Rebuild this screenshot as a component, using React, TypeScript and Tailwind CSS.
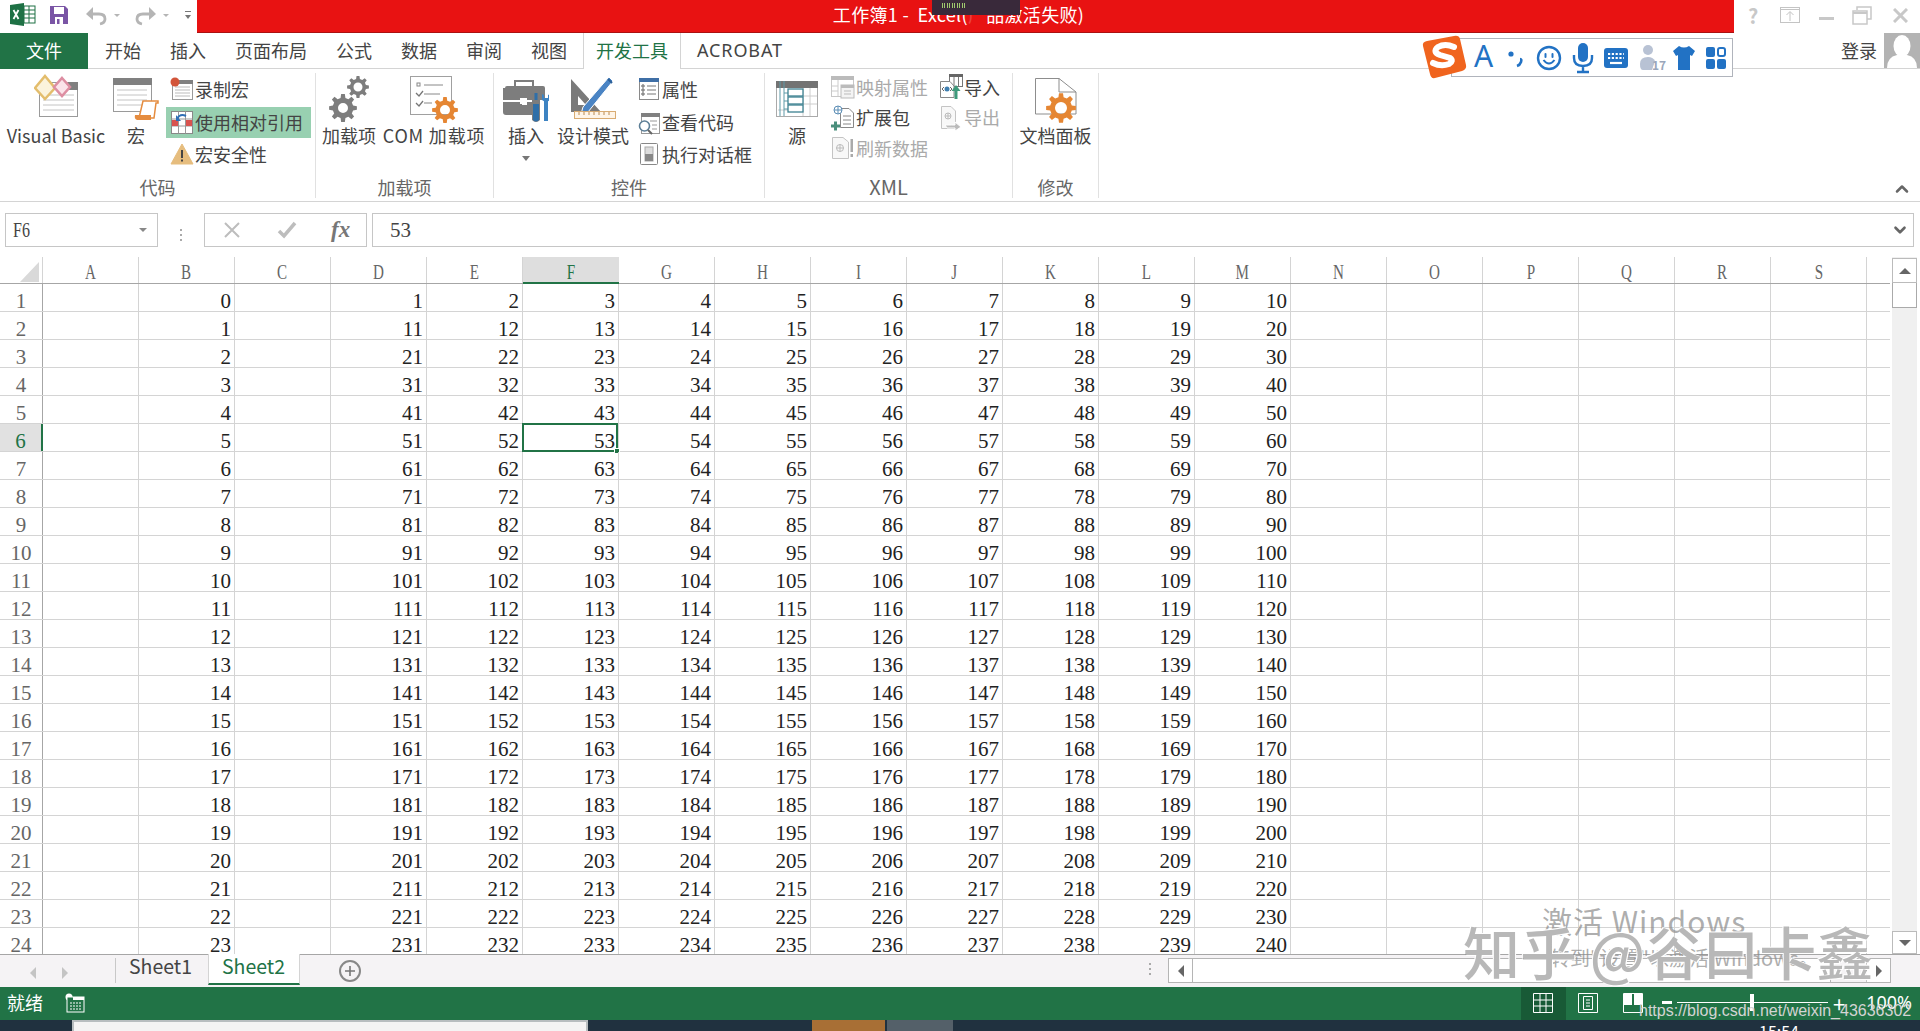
import type { ReactNode } from "react"
import { ChevronDown, ChevronUp } from "lucide-react"

const COLS = "ABCDEFGHIJKLMNOPQRS".split("")
const ROWS = Array.from({ length: 24 }, (_, i) => i)

const cellValue = (r: number, c: number) => {
  if (c === 1) return r
  if (c >= 3 && c <= 12) return r * 10 + c - 2
  return ""
}

// toothed wheel used by the add-in and document panel icons
function gearPath(cx: number, cy: number, r: number, hole: number, teeth = 8) {
  const step = (Math.PI * 2) / teeth
  const pts: string[] = []
  for (let i = 0; i < teeth; i++) {
    const a = i * step
    const list: [number, number][] = [
      [a - step * 0.3, r * 0.74],
      [a - step * 0.17, r],
      [a + step * 0.17, r],
      [a + step * 0.3, r * 0.74],
    ]
    list.forEach(([t, d]) => pts.push(`${(cx + Math.cos(t) * d).toFixed(2)} ${(cy + Math.sin(t) * d).toFixed(2)}`))
  }
  return `M${pts.join("L")}Z M${cx - hole} ${cy}a${hole} ${hole} 0 1 0 ${hole * 2} 0a${hole} ${hole} 0 1 0 ${-hole * 2} 0Z`
}

function Gear({ cx, cy, r, hole, fill }: { cx: number; cy: number; r: number; hole: number; fill: string }) {
  return <path d={gearPath(cx, cy, r, hole)} fill={fill} fillRule="evenodd" />
}

function Sep() {
  return <div className="mt-[4px] h-[125px] w-px shrink-0 bg-[#e1e1e1]" />
}

function Group({ width, label, labelClass = "", children }: { width: string; label: string; labelClass?: string; children: ReactNode }) {
  return (
    <div className={`flex shrink-0 flex-col pt-[5px] ${width}`}>
      <div className="flex h-[101px]">{children}</div>
      <div className={`flex h-[27px] items-center justify-center pb-[1px] text-[18px] leading-none text-[#666] ${labelClass}`}>{label}</div>
    </div>
  )
}

function LargeButton({ width, label, icon, caret, labelClass = "" }: { width: string; label: string; icon: ReactNode; caret?: boolean; labelClass?: string }) {
  return (
    <div className={`flex shrink-0 flex-col items-center ${width}`}>
      <div className="flex h-[50px] justify-center">{icon}</div>
      <div className={`-mt-[2px] h-[26px] whitespace-nowrap text-[18px] leading-[26px] text-[#444] ${labelClass}`}>{label}</div>
      {caret && <div className="mt-[8px] h-0 w-0 border-x-[4px] border-t-[5px] border-x-transparent border-t-[#777]" />}
    </div>
  )
}

function SmallButton({ label, icon, className = "", active, muted, h = "h-[32px]" }: { label: string; icon: ReactNode; className?: string; active?: boolean; muted?: boolean; h?: string }) {
  return (
    <div className={`flex items-center whitespace-nowrap text-[18px] ${h} ${active ? "bg-[#98d0b1]" : ""} ${muted ? "text-[#aaa]" : "text-[#444]"} ${className}`}>
      <div className="flex w-[26px] shrink-0 justify-center">{icon}</div>
      {label}
    </div>
  )
}

const VbIcon = (
  <svg width="44" height="50" viewBox="0 0 44 50">
    <rect x="5.5" y="8.5" width="38" height="34" fill="#fff" stroke="#9a9a9a" />
    <rect x="34" y="8" width="10" height="8" fill="#808080" />
    {[21, 26, 31, 36].map((y) => (
      <path key={y} d={`M9 ${y}H40`} stroke="#c4c4c4" />
    ))}
    <path d="M11 2L21 14 11 25 1 14Z" fill="#fbf3dc" stroke="#e3bd6c" strokeWidth="2.5" />
    <path d="M28 4L36 13 28 22 20 13Z" fill="#fbe4ea" stroke="#dd8ea2" strokeWidth="2.5" />
  </svg>
)

const MacroIcon = (
  <svg width="46" height="50" viewBox="0 0 46 50">
    <rect x="0.5" y="4.5" width="38" height="33" fill="#fff" stroke="#9a9a9a" />
    <rect x="0" y="4" width="39" height="7" fill="#808080" />
    {[16, 21, 26, 31].map((y) => (
      <path key={y} d={`M4 ${y}H34`} stroke="#c4c4c4" />
    ))}
    <path d="M30 27H45V29H43L41 44H26Z" fill="#fff" stroke="#e58c3f" strokeWidth="1.5" />
    <path d="M22 41H38V46H24Q21 45 22 41Z" fill="#e58c3f" />
  </svg>
)

const RecordIcon = (
  <svg width="24" height="24" viewBox="0 0 24 24">
    <rect x="2.5" y="3.5" width="20" height="19" fill="#fff" stroke="#9a9a9a" />
    <rect x="2" y="3" width="21" height="4" fill="#808080" />
    {[10, 13, 16, 19].map((y) => (
      <path key={y} d={`M5 ${y}H20`} stroke="#bbb" />
    ))}
    <circle cx="5" cy="5" r="4.5" fill="#d2553a" />
  </svg>
)

const RelativeIcon = (
  <svg width="24" height="26" viewBox="0 0 24 26">
    <rect x="1.5" y="1.5" width="21" height="22" fill="#fff" stroke="#888" />
    <path d="M8.5 1.5V23.5M15.5 1.5V23.5M1.5 9H22.5M1.5 16H22.5" stroke="#999" />
    <rect x="2" y="10" width="6" height="6" fill="#d9534f" />
    <rect x="16" y="10" width="6" height="6" fill="#d9534f" />
    <path d="M7 9Q10 3 16 6" fill="none" stroke="#2f6fb5" strokeWidth="2" />
    <path d="M6 5V11H11Z" fill="#2f6fb5" />
  </svg>
)

const WarnIcon = (
  <svg width="24" height="22" viewBox="0 0 24 22">
    <path d="M12 1L23 21H1Z" fill="#e6bd7e" stroke="#e6bd7e" strokeLinejoin="round" />
    <rect x="11" y="7" width="2" height="8" fill="#444" />
    <rect x="11" y="16.5" width="2" height="2" fill="#444" />
  </svg>
)

const AddinIcon = (
  <svg width="40" height="50" viewBox="0 0 40 50">
    <Gear cx={14} cy={34} r={14} hole={5} fill="#7d7d7d" />
    <Gear cx={29} cy={13} r={11} hole={4.5} fill="#7d7d7d" />
  </svg>
)

const ComIcon = (
  <svg width="48" height="50" viewBox="0 0 48 50">
    <rect x="0.5" y="2.5" width="41" height="38" fill="#fff" stroke="#a0a0a0" />
    <rect x="7" y="9" width="3" height="3" fill="none" stroke="#888" />
    <path d="M14 11H33M14 20H30M14 29H22" stroke="#888" />
    <path d="M6 19L9 22 13 17M6 29L9 32 13 27" fill="none" stroke="#777" strokeWidth="1.3" />
    <Gear cx={35} cy={36} r={13} hole={5} fill="#e58633" />
  </svg>
)

const ToolboxIcon = (
  <svg width="46" height="50" viewBox="0 0 46 50">
    <path d="M12 12V7H30V12" fill="none" stroke="#7d7d7d" strokeWidth="2" />
    <path d="M2 14Q2 12 4 12H40Q42 12 42 14V26H24V29H19V26H0V14Z" fill="#7d7d7d" />
    <path d="M0 28H19V31H24V28H30V41H3Q0 41 0 38Z" fill="#7d7d7d" />
    <rect x="17" y="24" width="7" height="6" fill="#fff" />
    <path d="M29 26H37V46Q33 50 29 46Z" fill="#7d7d7d" />
    <path d="M33 19V26" stroke="#2f6fa8" strokeWidth="3" />
    <path d="M30 30H36V46Q33 49 30 46Z" fill="#2f6fa8" />
    <path d="M43 26V47" stroke="#3d83c2" strokeWidth="4" />
    <path d="M39 20V26Q43 29 47 26V20L45 21V24H41V21Z" fill="#3d83c2" />
  </svg>
)

const DesignIcon = (
  <svg width="46" height="50" viewBox="0 0 46 50">
    <path d="M1 5V38H31ZM8 22V31H16Z" fill="#7a7a7a" fillRule="evenodd" />
    <path d="M43 7L39 3 13 33 11 40 18 38Z" fill="#4a84c4" stroke="#fff" />
    <path d="M38 5L42 9" stroke="#2d6098" strokeWidth="2" />
    <rect x="4.5" y="37.5" width="41" height="7" fill="#fff5e8" stroke="#d9ac73" />
    <path d="M9 38V41M14 38V41M19 38V41M24 38V41M29 38V41M34 38V41M39 38V41" stroke="#b98a50" />
  </svg>
)

const PropsIcon = (
  <svg width="22" height="24" viewBox="0 0 22 24">
    <rect x="1.5" y="1.5" width="19" height="21" fill="#fff" stroke="#8a8a8a" />
    <rect x="1" y="1" width="20" height="4" fill="#3f6fa6" />
    <path d="M9 9H18M9 13H18M9 17H18" stroke="#777" />
    <circle cx="5" cy="9" r="1.2" fill="none" stroke="#555" />
    <circle cx="5" cy="13" r="1.2" fill="none" stroke="#555" />
    <circle cx="5" cy="17" r="1.2" fill="none" stroke="#555" />
  </svg>
)

const ViewCodeIcon = (
  <svg width="24" height="24" viewBox="0 0 24 24">
    <rect x="4.5" y="2.5" width="18" height="20" fill="#fff" stroke="#999" />
    <rect x="4" y="2" width="19" height="4" fill="#808080" />
    <path d="M13 10H20M15 14H20M15 18H20" stroke="#999" />
    <circle cx="7.5" cy="15" r="5" fill="#fff" stroke="#5d7f97" strokeWidth="1.6" />
    <path d="M11 19L15 23" stroke="#666" strokeWidth="2" />
  </svg>
)

const DialogIcon = (
  <svg width="20" height="24" viewBox="0 0 20 24">
    <rect x="1.5" y="1.5" width="17" height="21" rx="1" fill="#fff" stroke="#888" />
    <rect x="6" y="5" width="8" height="14" fill="#ddd" stroke="#aaa" />
    <rect x="6" y="12" width="8" height="7" fill="#888" />
  </svg>
)

const SourceIcon = (
  <svg width="42" height="50" viewBox="0 0 42 50">
    <rect x="0.5" y="7.5" width="41" height="35" fill="#fff" stroke="#aaa" />
    <path d="M27 14V42M34 14V42M27 22H41M27 30H41M2 36H27" stroke="#ccc" />
    <rect x="0" y="7" width="42" height="7" fill="#737373" />
    <path d="M4 7V42M8 7V42M8 19H12M8 27H12M8 35H12" stroke="#5f9aa8" />
    <rect x="12" y="15" width="15" height="7" fill="#fff" stroke="#3d8191" strokeWidth="1.3" />
    <rect x="12" y="23" width="15" height="7" fill="#fff" stroke="#3d8191" strokeWidth="1.3" />
    <rect x="12" y="31" width="15" height="7" fill="#fff" stroke="#3d8191" strokeWidth="1.3" />
  </svg>
)

const MapIcon = (
  <svg width="24" height="24" viewBox="0 0 24 24">
    <rect x="0.5" y="1.5" width="22" height="20" fill="#fff" stroke="#c8c8c8" />
    <rect x="0" y="1" width="23" height="4" fill="#bbb" />
    <path d="M7 5V21M1 11H7M1 16H7" stroke="#ccc" />
    <rect x="10" y="10" width="13" height="13" fill="#f4f4f4" stroke="#bbb" />
    <rect x="10" y="10" width="13" height="3" fill="#bbb" />
    <path d="M13 16H20M13 19H20" stroke="#bbb" />
  </svg>
)

const PackIcon = (
  <svg width="24" height="26" viewBox="0 0 24 26">
    <path d="M9.5 3.5H18L22.5 8V22.5H9.5Z" fill="#fff" stroke="#888" />
    <path d="M12 11H20M12 15H20M12 19H20" stroke="#888" />
    <circle cx="7" cy="5" r="4" fill="#fff" stroke="#5b8db5" />
    <path d="M3 5H11M7 1V9" stroke="#5b8db5" />
    <path d="M0 21H9M4.5 16.5V25.5" stroke="#4a8f7c" strokeWidth="3" />
  </svg>
)

const RefreshIcon = (
  <svg width="24" height="24" viewBox="0 0 24 24">
    <path d="M1.5 1.5H12L17.5 6V22.5H1.5Z" fill="#f8f8f8" stroke="#c4c4c4" />
    <circle cx="9" cy="12" r="3.5" fill="none" stroke="#bbb" />
    <path d="M5.5 12H12.5M9 8.5V15.5" stroke="#bbb" />
    <rect x="19.5" y="3" width="2.5" height="13" fill="#aaa" />
    <rect x="19.5" y="18" width="2.5" height="3" fill="#aaa" />
  </svg>
)

const ImportIcon = (
  <svg width="24" height="26" viewBox="0 0 24 26">
    <rect x="10.5" y="0.5" width="13" height="12" fill="#fff" stroke="#777" />
    <rect x="10" y="0" width="14" height="3" fill="#666" />
    <path d="M15 3V12M19.5 3V12" stroke="#777" />
    <path d="M1.5 7.5H11L15 12V23.5H1.5Z" fill="#fff" stroke="#888" />
    <circle cx="8" cy="15" r="2.5" fill="#3f7fb0" />
    <path d="M3 15L5 13M3 15L5 17M13 15L11 13M13 15L11 17" stroke="#666" />
    <path d="M17 25V15" stroke="#3e9a7c" strokeWidth="3" />
    <path d="M12.5 17L17 11 21.5 17Z" fill="#3e9a7c" />
  </svg>
)

const ExportIcon = (
  <svg width="24" height="26" viewBox="0 0 24 26">
    <path d="M2.5 1.5H12L16.5 6V23.5H2.5Z" fill="#f8f8f8" stroke="#c4c4c4" />
    <circle cx="9" cy="11" r="3" fill="none" stroke="#bbb" />
    <path d="M6 11H12M9 8V14" stroke="#bbb" />
    <path d="M6 20Q14 20 16 20V17L22 22 16 26V23H8Z" fill="#bbb" stroke="#fff" />
  </svg>
)

const PanelIcon = (
  <svg width="42" height="50" viewBox="0 0 42 50">
    <path d="M0.5 4.5H24L41 18V40H0.5Z" fill="#fff" stroke="#8d8d8d" />
    <path d="M24 4.5V18H41" fill="none" stroke="#8d8d8d" />
    <Gear cx={26} cy={34} r={15} hole={6} fill="#e58633" />
  </svg>
)

function SogouBar() {
  return (
    <div className="absolute left-[1421px] top-[35px] h-[44px] w-[312px]">
      <div className="absolute bottom-[2px] left-[30px] right-0 top-[3px] flex items-center border border-[#b0b4bc] bg-white">
        <span className="absolute left-[22px] -mt-[3px] font-['Noto_Sans',sans-serif] text-[30px] leading-none text-[#2272c4]">A</span>
        <svg className="absolute left-[53px]" width="22" height="22" viewBox="0 0 22 22">
          <circle cx="6" cy="7" r="2.6" fill="#2272c4" />
          <path d="M15 12Q17 12 16 15 15 18 12 19" fill="none" stroke="#2272c4" strokeWidth="2.6" />
        </svg>
        <svg className="absolute left-[84px]" width="26" height="26" viewBox="0 0 26 26">
          <circle cx="13" cy="13" r="11" fill="none" stroke="#2272c4" strokeWidth="2.4" />
          <rect x="8.5" y="8" width="2" height="5" rx="1" fill="#2272c4" />
          <rect x="15.5" y="8" width="2" height="5" rx="1" fill="#2272c4" />
          <path d="M7.5 15Q13 22 18.5 15" fill="none" stroke="#2272c4" strokeWidth="2" />
        </svg>
        <svg className="absolute left-[119px]" width="24" height="32" viewBox="0 0 24 32">
          <rect x="7" y="1" width="10" height="19" rx="5" fill="#2272c4" />
          <path d="M3 13V16Q3 24 12 24 21 24 21 16V13M12 24V29M6 30H18" fill="none" stroke="#2272c4" strokeWidth="2.4" />
        </svg>
        <svg className="absolute left-[151px]" width="26" height="22" viewBox="0 0 26 22">
          <rect x="1" y="1" width="24" height="20" rx="3" fill="#2272c4" />
          <path d="M5 7H21M5 11H21" stroke="#fff" strokeWidth="2.2" strokeDasharray="2.2 1.6" />
          <path d="M7 16H19" stroke="#fff" strokeWidth="2.2" />
        </svg>
        <svg className="absolute left-[187px]" width="28" height="28" viewBox="0 0 28 28">
          <circle cx="9" cy="6" r="5" fill="#b8c2d4" />
          <path d="M1 20Q1 13 9 13 14 13 16 17L13 26H4Q1 26 1 20Z" fill="#b8c2d4" />
          <text x="13" y="26" fontSize="12" fontWeight="700" fill="#9aa6ba">17</text>
        </svg>
        <svg className="absolute left-[220px]" width="24" height="28" viewBox="0 0 24 28">
          <path d="M7 2Q12 5 17 2L23 7 20 12 18 11V26H6V11L4 12 1 7Z" fill="#2272c4" />
        </svg>
        <svg className="absolute left-[253px]" width="22" height="26" viewBox="0 0 22 26">
          <rect x="1" y="2" width="9" height="10" rx="2" fill="#2272c4" />
          <rect x="13" y="3" width="7" height="8" rx="2" fill="none" stroke="#2272c4" strokeWidth="2" />
          <rect x="1" y="14" width="9" height="10" rx="2" fill="#2272c4" />
          <rect x="12" y="14" width="9" height="10" rx="2" fill="#2272c4" />
        </svg>
      </div>
      <svg className="absolute left-0 top-0" width="46" height="44" viewBox="0 0 46 44">
        <path d="M2 11Q1 7 6 6L33 1Q38 0 39 4L45 30Q46 34 41 36L14 43Q10 44 9 39Z" fill="#f0641e" />
        <path d="M33 12Q24 8 17 12 11 17 19 20L29 23Q33 26 28 29 20 32 12 28" fill="none" stroke="#fff" strokeWidth="6" strokeLinecap="round" />
      </svg>
    </div>
  )
}

function TitleBar() {
  return (
    <div className="flex h-[33px] shrink-0">
      <div className="relative w-[197px] shrink-0">
        <svg className="absolute left-[10px] top-[3px]" width="26" height="23" viewBox="0 0 26 23">
          <path d="M0 2L14 0V23L0 21Z" fill="#1e7145" />
          <rect x="14" y="3" width="11" height="17" fill="#fff" stroke="#1e7145" />
          <path d="M14 7H25M14 11H25M14 15H25M19 3V20" stroke="#1e7145" />
          <path d="M3.5 7L8.5 16M8.5 7L3.5 16" stroke="#fff" strokeWidth="1.8" />
        </svg>
        <svg className="absolute left-[49px] top-[5px]" width="20" height="20" viewBox="0 0 20 20">
          <path d="M1 1H16L19 4V19H1Z" fill="#7a55a5" />
          <rect x="5" y="2" width="10" height="7" fill="#fff" />
          <rect x="6" y="12" width="8" height="7" fill="#fff" />
          <rect x="8" y="14" width="2.5" height="5" fill="#7a55a5" />
        </svg>
        <svg className="absolute left-[85px] top-[6px]" width="22" height="20" viewBox="0 0 22 20">
          <path d="M5 8H14Q20 8 20 13 20 17 15 18" fill="none" stroke="#b5b5b5" strokeWidth="2.8" />
          <path d="M8 1L1 8 8 14Z" fill="#b5b5b5" />
        </svg>
        <div className="absolute left-[114px] top-[14px] h-0 w-0 border-x-[3px] border-t-[3px] border-x-transparent border-t-[#b5b5b5]" />
        <svg className="absolute left-[135px] top-[6px]" width="22" height="20" viewBox="0 0 22 20">
          <path d="M17 8H8Q2 8 2 13 2 17 7 18" fill="none" stroke="#b5b5b5" strokeWidth="2.8" />
          <path d="M14 1L21 8 14 14Z" fill="#b5b5b5" />
        </svg>
        <div className="absolute left-[163px] top-[14px] h-0 w-0 border-x-[3px] border-t-[3px] border-x-transparent border-t-[#b5b5b5]" />
        <div className="absolute left-[185px] top-[11px] h-[1px] w-[6px] bg-[#777]" />
        <div className="absolute left-[185px] top-[15px] h-0 w-0 border-x-[3px] border-t-[4px] border-x-transparent border-t-[#777]" />
      </div>
      <div className="relative flex flex-1 items-center justify-center border-b border-[#a11] bg-[#e81212] pb-[3px] pr-[14px] text-[18px] tracking-[0.3px] text-white">
        工作簿1&nbsp;-&nbsp;&nbsp;Excel(<span className="opacity-20">产</span>品激活失败)
        <div className="absolute left-[735px] top-0 flex h-[15px] w-[88px] items-start bg-[#39293a] pl-[10px] pt-[3px]">
          <div className="h-[5px] w-[24px] bg-[repeating-linear-gradient(90deg,#9fc86e_0,#9fc86e_1px,#39293a_1px,#39293a_2.5px)]" />
        </div>
      </div>
      <div className="relative w-[186px] shrink-0">
        <span className="absolute left-[14px] top-[1px] text-[20px] font-bold text-[#c8c8c8]">?</span>
        <svg className="absolute left-[46px] top-[7px]" width="20" height="16" viewBox="0 0 20 16">
          <rect x="0.5" y="0.5" width="19" height="15" fill="none" stroke="#c4c4c4" />
          <path d="M1 2.5H19M10 14V5M6.5 8L10 4.5 13.5 8" fill="none" stroke="#c4c4c4" />
        </svg>
        <div className="absolute left-[85px] top-[17px] h-[3px] w-[15px] bg-[#c8c8c8]" />
        <svg className="absolute left-[118px] top-[6px]" width="20" height="19" viewBox="0 0 20 19">
          <path d="M5 4V1H19V13H15" fill="none" stroke="#c8c8c8" strokeWidth="1.5" />
          <rect x="1" y="5" width="14" height="13" fill="none" stroke="#c8c8c8" strokeWidth="1.5" />
          <path d="M1 7H15" stroke="#c8c8c8" strokeWidth="2" />
        </svg>
        <svg className="absolute left-[159px] top-[8px]" width="15" height="15" viewBox="0 0 15 15">
          <path d="M1 1L14 14M14 1L1 14" stroke="#c8c8c8" strokeWidth="3" />
        </svg>
      </div>
    </div>
  )
}

function TabBar() {
  const plain = ["开始", "插入", "页面布局", "公式", "数据", "审阅", "视图"]
  return (
    <div className="flex h-[36px] shrink-0 border-b border-[#d4d4d4] text-[18px] leading-[35px] text-[#444]">
      <div className="h-[36px] w-[88px] bg-[#217346] text-center text-white">文件</div>
      <div className="w-[2.5px]" />
      {plain.map((t) => (
        <div key={t} className="px-[14.5px]">
          {t}
        </div>
      ))}
      <div className="ml-[1.5px] h-[36px] w-[98px] border-x border-[#d4d4d4] bg-white text-center text-[#217346]">开发工具</div>
      <div className="pl-[16px] font-['Noto_Sans',sans-serif] tracking-[0.9px]">ACROBAT</div>
      <div className="ml-auto mr-[7px] text-[#444]">登录</div>
      <div className="h-[35px] w-[36px] overflow-hidden bg-[#b3b3b3]">
        <svg width="36" height="35" viewBox="0 0 36 35">
          <ellipse cx="18" cy="13" rx="8.5" ry="11" fill="#fff" />
          <path d="M3 35Q3 24 13 22H23Q33 24 33 35Z" fill="#fff" />
        </svg>
      </div>
    </div>
  )
}

function Ribbon() {
  return (
    <div className="flex h-[133px] shrink-0 border-b border-[#d4d4d4]">
      <Group width="w-[315px]" label="代码">
        <LargeButton width="w-[112px]" label="Visual Basic" icon={VbIcon} />
        <LargeButton width="w-[48px]" label="宏" icon={MacroIcon} />
        <div className="ml-[6px] w-[145px] shrink-0">
          <SmallButton h="h-[30px]" label="录制宏" icon={RecordIcon} className="pl-[3px]" />
          <SmallButton h="h-[31px]" label="使用相对引用" icon={RelativeIcon} active className="mt-[3px] pl-[3px]" />
          <SmallButton label="宏安全性" icon={WarnIcon} className="pl-[3px]" />
        </div>
      </Group>
      <Sep />
      <Group width="w-[177px]" label="加载项">
        <LargeButton width="w-[66px]" label="加载项" icon={AddinIcon} />
        <LargeButton width="w-[104px]" label="COM 加载项" labelClass="tracking-[0.8px]" icon={ComIcon} />
      </Group>
      <Sep />
      <Group width="w-[270px]" label="控件">
        <LargeButton width="w-[64px]" label="插入" icon={ToolboxIcon} caret />
        <LargeButton width="w-[70px]" label="设计模式" icon={DesignIcon} />
        <div className="ml-[8px]">
          <SmallButton h="h-[30px]" label="属性" icon={PropsIcon} />
          <SmallButton h="h-[31px]" label="查看代码" icon={ViewCodeIcon} className="mt-[3px]" />
          <SmallButton label="执行对话框" icon={DialogIcon} />
        </div>
      </Group>
      <Sep />
      <Group width="w-[247px]" label="XML" labelClass="text-[20px]">
        <LargeButton width="w-[64px]" label="源" icon={SourceIcon} />
        <div className="ml-[1px] -mt-[2px] w-[108px]">
          <SmallButton h="h-[30.5px]" label="映射属性" icon={MapIcon} muted />
          <SmallButton h="h-[30.5px]" label="扩展包" icon={PackIcon} />
          <SmallButton h="h-[30.5px]" label="刷新数据" icon={RefreshIcon} muted />
        </div>
        <div className="-mt-[2px]">
          <SmallButton h="h-[30.5px]" label="导入" icon={ImportIcon} />
          <SmallButton h="h-[30.5px]" label="导出" icon={ExportIcon} muted />
        </div>
      </Group>
      <Sep />
      <Group width="w-[85px]" label="修改">
        <LargeButton width="w-[85px]" label="文档面板" icon={PanelIcon} />
      </Group>
      <Sep />
      <div className="ml-auto mr-[8px] self-end pb-[2px]">
        <ChevronUp size={20} strokeWidth={3} className="text-[#666]" />
      </div>
    </div>
  )
}

function FormulaBar() {
  return (
    <div className="flex h-[55px] shrink-0 pl-[5px] pt-[11px] font-['Liberation_Serif',serif]">
      <div className="flex h-[34px] w-[153px] items-center justify-between border border-[#c6c6c6] pl-[7px] pr-[10px] text-[20px] leading-[36px] text-[#444]">
        <span className="inline-block origin-left scale-x-[0.8]">F6</span>
        <div className="h-0 w-0 border-x-[4px] border-t-[4px] border-x-transparent border-t-[#888]" />
      </div>
      <div className="flex w-[46px] items-center justify-center">
        <div className="h-[13px] w-[2px] bg-[repeating-linear-gradient(180deg,#aaa_0,#aaa_2px,transparent_2px,transparent_5px)]" />
      </div>
      <div className="relative flex h-[34px] w-[163px] items-center border border-[#c6c6c6]">
        <svg className="absolute left-[18px]" width="18" height="18" viewBox="0 0 18 18">
          <path d="M2 2L16 16M16 2L2 16" stroke="#bdbdbd" strokeWidth="2" />
        </svg>
        <svg className="absolute left-[72px]" width="20" height="18" viewBox="0 0 20 18">
          <path d="M2 10L7 15 18 2" fill="none" stroke="#bdbdbd" strokeWidth="3.5" />
        </svg>
        <span className="absolute left-[126px] text-[23px] font-bold italic text-[#777]">fx</span>
      </div>
      <div className="ml-[5px] flex h-[34px] w-[1542px] items-center border border-[#c6c6c6] pl-[17px] pr-[4px] text-[21px] leading-[36px] text-[#444]">
        <span>53</span>
        <ChevronDown size={18} strokeWidth={3.5} className="ml-auto text-[#666]" />
      </div>
    </div>
  )
}

function Sheet() {
  return (
    <div className="flex h-[697px] shrink-0 overflow-hidden">
      <div className="w-[1890px] shrink-0 font-['Liberation_Serif',serif] text-[21px]">
        <div className="flex h-[27px] border-b border-[#a6a6a6] leading-[30px] text-[#666]">
          <div className="relative w-[43px] shrink-0 border-r border-[#d4d4d4]">
            <svg className="absolute left-[20px] top-[5px]" width="19" height="20" viewBox="0 0 19 20">
              <path d="M19 0V20H0Z" fill="#d9d9d9" />
            </svg>
          </div>
          {COLS.map((c) => (
            <div key={c} className={`w-[96px] shrink-0 text-center ${c === "F" ? "h-[27px] border-b-2 border-[#217346] bg-[#dedede] text-[#217346]" : "border-r border-[#d4d4d4]"}`}>
              <span className="inline-block scale-x-[0.72]">{c}</span>
            </div>
          ))}
        </div>
        {ROWS.map((r) => (
          <div key={r} className="flex h-[28px] border-b border-[#d4d4d4] leading-[34px] text-[#222]">
            <div className={`w-[43px] shrink-0 border-r text-center ${r === 5 ? "border-r-2 border-[#217346] bg-[#e1e1e1] text-[#217346]" : "border-[#a6a6a6] text-[#666]"}`}>{r + 1}</div>
            {COLS.map((c, i) => (
              <div key={c} className="relative h-[28px] w-[96px] shrink-0 border-r border-[#d4d4d4] pr-[3px] text-right">
                {cellValue(r, i)}
                {r === 5 && c === "F" && (
                  <div className="absolute -left-px -top-px bottom-0 right-0 border-2 border-[#217346]">
                    <div className="absolute -bottom-[4px] -right-[4px] h-[6px] w-[6px] border border-white bg-[#217346]" />
                  </div>
                )}
              </div>
            ))}
            <div className="h-[28px] flex-1" />
          </div>
        ))}
      </div>
      <div className="ml-[2px] flex w-[25px] shrink-0 flex-col bg-[#f0f0f0]">
        <div className="mt-[1px] flex h-[25px] items-center justify-center border border-[#bbb] bg-white">
          <div className="h-0 w-0 border-x-[6px] border-b-[6px] border-x-transparent border-b-[#666]" />
        </div>
        <div className="h-[25px] border-x border-b border-[#aaa] bg-white" />
        <div className="flex-1" />
        <div className="flex h-[23px] items-center justify-center border border-[#bbb] bg-white">
          <div className="h-0 w-0 border-x-[6px] border-t-[6px] border-x-transparent border-t-[#666]" />
        </div>
      </div>
    </div>
  )
}

function SheetTabs() {
  return (
    <div className="flex h-[33px] shrink-0 items-start border-t border-[#a6a6a6] bg-[#f5f3f5] text-[19.5px]">
      <div className="mt-[12px] flex w-[115px] pl-[30px]">
        <div className="h-0 w-0 border-y-[6px] border-r-[6px] border-y-transparent border-r-[#c4c4c4]" />
        <div className="ml-[26px] h-0 w-0 border-y-[6px] border-l-[6px] border-y-transparent border-l-[#c4c4c4]" />
      </div>
      <div className="mt-[3px] h-[25px] w-px bg-[#c8c8c8]" />
      <div className="h-[29px] w-[92px] pl-[13px] leading-[22px] text-[#444]">Sheet1</div>
      <div className="-mt-px h-[31px] w-[92px] border-x border-b-2 border-x-[#d4d4d4] border-b-[#217346] bg-white pl-[13px] leading-[23px] text-[#217346]">Sheet2</div>
      <div className="ml-[39px] mt-[5px] flex h-[22px] w-[22px] items-center justify-center rounded-full border-2 border-[#888]">
        <svg width="10" height="10" viewBox="0 0 10 10">
          <path d="M5 0V10M0 5H10" stroke="#777" strokeWidth="1.6" />
        </svg>
      </div>
      <div className="ml-auto mt-[8px] h-[13px] w-[2px] bg-[repeating-linear-gradient(180deg,#aaa_0,#aaa_2px,transparent_2px,transparent_5px)]" />
      <div className="ml-[17px] mr-[29px] mt-[3px] flex h-[25px] w-[723px] border border-[#b5b5b5] bg-[#f5f3f5]">
        <div className="flex w-[24px] items-center justify-center border-r border-[#b5b5b5] bg-white">
          <div className="h-0 w-0 border-y-[6px] border-r-[6px] border-y-transparent border-r-[#666]" />
        </div>
        <div className="w-[638px] border-r border-[#b5b5b5] bg-white" />
        <div className="flex-1" />
        <div className="flex w-[24px] items-center justify-center border-l border-[#c4c4c4] bg-white">
          <div className="h-0 w-0 border-y-[6px] border-l-[6px] border-y-transparent border-l-[#666]" />
        </div>
      </div>
    </div>
  )
}

function StatusBar() {
  return (
    <div className="flex h-[33px] shrink-0 items-center bg-[#217346] pb-[2px] text-[18px] text-white">
      <span className="ml-[7px]">就绪</span>
      <svg className="ml-[22px]" width="20" height="20" viewBox="0 0 20 20">
        <circle cx="4" cy="4" r="3.5" fill="#fff" />
        <rect x="2" y="4" width="17" height="15" fill="#217346" stroke="#fff" />
        <rect x="8" y="4" width="11" height="3" fill="#fff" />
        <path d="M5 10H16M5 13H16M5 16H16" stroke="#fff" strokeDasharray="2 1" />
      </svg>
      <div className="-mb-[2px] ml-auto flex h-[33px] w-[45px] items-center justify-center bg-[#185a36] pb-[2px]">
        <svg width="20" height="20" viewBox="0 0 20 20">
          <path d="M0.5 0.5H19.5V19.5H0.5ZM7 0.5V19.5M13 0.5V19.5M0.5 7H19.5M0.5 13H19.5" fill="none" stroke="#fff" />
        </svg>
      </div>
      <svg className="ml-[12px]" width="20" height="20" viewBox="0 0 20 20">
        <path d="M0.5 0.5H19.5V19.5H0.5Z M5.5 3.5H14.5V16.5H5.5Z M8 7H12M8 10H12M8 13H12" fill="none" stroke="#fff" />
      </svg>
      <svg className="ml-[25px]" width="20" height="20" viewBox="0 0 20 20">
        <path d="M0.5 0.5H19.5V19.5H0.5Z" fill="none" stroke="#fff" />
        <path d="M1 1H9V12H1ZM11 1H19V12H11Z" fill="#fff" />
      </svg>
      <div className="ml-[19px] h-[3px] w-[10px] bg-white" />
      <div className="relative ml-[5px] h-px w-[151px] bg-white">
        <div className="absolute left-[73px] -top-[8px] h-[17px] w-[4px] bg-white" />
      </div>
      <span className="ml-[5px] text-[22px] leading-none">+</span>
      <span className="ml-[21px] mr-[8px] font-['Noto_Sans',sans-serif] text-[18px]">100%</span>
    </div>
  )
}

function Taskbar() {
  return (
    <div className="relative flex h-[11px] shrink-0 overflow-hidden bg-[#20313f]">
      <div className="ml-[72px] w-[516px] border-x-2 border-t-2 border-[#b8bec0] bg-[#f4f4f4]" />
      <div className="ml-[224px] w-[73px] bg-[#a86f35]" />
      <div className="ml-[2px] w-[66px] bg-[#546069]" />
      <span className="absolute left-[1759px] top-[3px] text-[16px] leading-none text-white">15:54</span>
    </div>
  )
}

export default function App() {
  return (
    <div className="relative flex h-[1031px] w-[1920px] flex-col overflow-hidden bg-white font-['Noto_Sans_CJK_SC','Noto_Sans',sans-serif]">
      <TitleBar />
      <TabBar />
      <Ribbon />
      <FormulaBar />
      <Sheet />
      <SheetTabs />
      <StatusBar />
      <Taskbar />

      <SogouBar />

      {/* watermarks sit over the sheet */}
      <div className="pointer-events-none absolute left-[1542px] top-[902px] whitespace-nowrap text-[30px] leading-[36px] tracking-[1px] text-[#8a8a8a]/70">激活 Windows</div>
      <div className="pointer-events-none absolute left-[1550px] top-[946px] whitespace-nowrap text-[20px] leading-[24px] text-[#8a8a8a]/70">转到"设置"以激活 Windows。</div>
      <div className="pointer-events-none absolute left-[1463px] top-[915px] whitespace-nowrap text-[57px] font-medium leading-[70px] text-[#888]/60 [text-shadow:1px_1px_0_#fff,-1px_-1px_0_#fff]">知乎 @谷曰卡鑫</div>
      <div className="pointer-events-none absolute left-[1639px] top-[1000px] whitespace-nowrap font-['Liberation_Sans',sans-serif] text-[16px] leading-[22px] text-[#d4d4d4]">https://blog.csdn.net/weixin_43636302</div>
    </div>
  )
}
